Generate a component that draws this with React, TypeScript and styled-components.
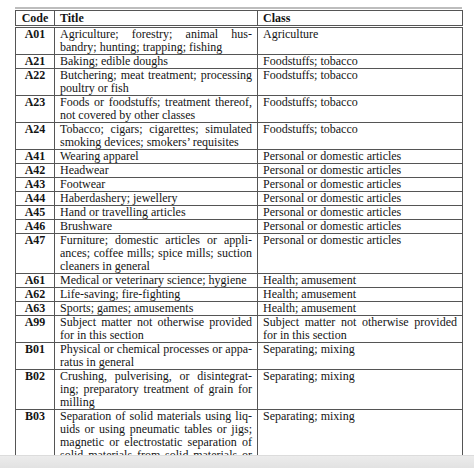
import React from "react";
import styled, { createGlobalStyle } from "styled-components";

const Global = createGlobalStyle`
  html, body { margin: 0; padding: 0; background: #fff; overflow: hidden; }
  body { width: 474px; height: 468px; }
`;

const Page = styled.div`
  padding: 7px 0 0 15px;
  font-family: "Liberation Serif", "Times New Roman", serif;
  font-size: 12px;
  color: #141414;
`;

const TopRule = styled.div`
  width: 447px;
  height: 2px;
  background: #bdbdbd;
  margin-bottom: 1px;
`;

const Table = styled.table`
  width: 447px;
  table-layout: fixed;
  border-collapse: collapse;
  border: 1px solid #555;
`;

const HeadCell = styled.th<{ $center?: boolean }>`
  font-weight: bold;
  text-align: ${(p) => (p.$center ? "center" : "left")};
  line-height: 13px;
  padding: 1px 5px 0;
  border-left: 1px solid #555;
  border-right: 1px solid #555;
  border-bottom: 3px double #555;
`;

const CodeCell = styled.td`
  font-weight: bold;
  text-align: center;
  vertical-align: top;
  line-height: 13px;
  padding: 0;
  border: 1px solid #555;
`;

const TextCell = styled.td`
  vertical-align: top;
  line-height: 13px;
  padding: 0 5px;
  border: 1px solid #555;
`;

const Line = styled.span<{ $justify?: boolean }>`
  display: block;
  text-align: ${(p) => (p.$justify ? "justify" : "left")};
  text-align-last: ${(p) => (p.$justify ? "justify" : "left")};
`;

const BottomShade = styled.div`
  position: fixed;
  left: 0;
  right: 0;
  bottom: 0;
  height: 12px;
  background: linear-gradient(#ececec, #e2e2e2);
  border-top: 1px solid #dcdcdc;
`;

type Row = { code: string; title: string[]; cls: string[] };

const rows: Row[] = [
  { code: "A01", title: ["Agriculture; forestry; animal hus-", "bandry; hunting; trapping; fishing"], cls: ["Agriculture"] },
  { code: "A21", title: ["Baking; edible doughs"], cls: ["Foodstuffs; tobacco"] },
  { code: "A22", title: ["Butchering; meat treatment; processing", "poultry or fish"], cls: ["Foodstuffs; tobacco"] },
  { code: "A23", title: ["Foods or foodstuffs; treatment thereof,", "not covered by other classes"], cls: ["Foodstuffs; tobacco"] },
  { code: "A24", title: ["Tobacco; cigars; cigarettes; simulated", "smoking devices; smokers\u2019 requisites"], cls: ["Foodstuffs; tobacco"] },
  { code: "A41", title: ["Wearing apparel"], cls: ["Personal or domestic articles"] },
  { code: "A42", title: ["Headwear"], cls: ["Personal or domestic articles"] },
  { code: "A43", title: ["Footwear"], cls: ["Personal or domestic articles"] },
  { code: "A44", title: ["Haberdashery; jewellery"], cls: ["Personal or domestic articles"] },
  { code: "A45", title: ["Hand or travelling articles"], cls: ["Personal or domestic articles"] },
  { code: "A46", title: ["Brushware"], cls: ["Personal or domestic articles"] },
  { code: "A47", title: ["Furniture; domestic articles or appli-", "ances; coffee mills; spice mills; suction", "cleaners in general"], cls: ["Personal or domestic articles"] },
  { code: "A61", title: ["Medical or veterinary science; hygiene"], cls: ["Health; amusement"] },
  { code: "A62", title: ["Life-saving; fire-fighting"], cls: ["Health; amusement"] },
  { code: "A63", title: ["Sports; games; amusements"], cls: ["Health; amusement"] },
  { code: "A99", title: ["Subject matter not otherwise provided", "for in this section"], cls: ["Subject matter not otherwise provided", "for in this section"] },
  { code: "B01", title: ["Physical or chemical processes or appa-", "ratus in general"], cls: ["Separating; mixing"] },
  { code: "B02", title: ["Crushing, pulverising, or disintegrat-", "ing; preparatory treatment of grain for", "milling"], cls: ["Separating; mixing"] },
  {
    code: "B03",
    title: [
      "Separation of solid materials using liq-",
      "uids or using pneumatic tables or jigs;",
      "magnetic or electrostatic separation of",
      "solid materials from solid materials or",
      "fluids; separation by high-voltage elec-",
      "tric fields",
    ],
    cls: ["Separating; mixing"],
  },
];

const Lines: React.FC<{ lines: string[] }> = ({ lines }) => (
  <>
    {lines.map((l, i) => (
      <Line key={i} $justify={i < lines.length - 1}>
        {l}
      </Line>
    ))}
  </>
);

export default function App() {
  return (
    <>
      <Global />
      <Page>
        <TopRule />
        <Table>
          <colgroup>
            <col style={{ width: 39 }} />
            <col style={{ width: 203 }} />
            <col style={{ width: 205 }} />
          </colgroup>
          <thead>
            <tr>
              <HeadCell $center>Code</HeadCell>
              <HeadCell>Title</HeadCell>
              <HeadCell>Class</HeadCell>
            </tr>
          </thead>
          <tbody>
            {rows.map((r) => (
              <tr key={r.code}>
                <CodeCell>{r.code}</CodeCell>
                <TextCell>
                  <Lines lines={r.title} />
                </TextCell>
                <TextCell>
                  <Lines lines={r.cls} />
                </TextCell>
              </tr>
            ))}
          </tbody>
        </Table>
      </Page>
      <BottomShade />
    </>
  );
}
